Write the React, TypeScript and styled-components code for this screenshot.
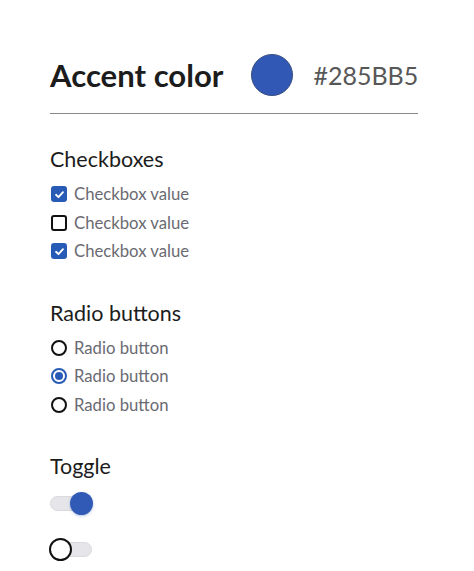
import styled, { createGlobalStyle } from "styled-components";

const ACCENT = "#285BB5";

const GlobalStyle = createGlobalStyle`
  body {
    margin: 0;
    background: #fff;
    font-family: "Lato", "Liberation Sans", sans-serif;
  }
`;

const Page = styled.div`
  padding: 54px 56px 0 50px;
`;

const HeaderRow = styled.div`
  display: flex;
  align-items: center;
  height: 42px;
`;

const Title = styled.h1`
  margin: 0;
  font-size: 31.1px;
  font-weight: 700;
  color: #1c1c1c;
  white-space: nowrap;
  flex-shrink: 0;
`;

const Swatch = styled.div<{ $color: string }>`
  width: 42px;
  height: 42px;
  flex-shrink: 0;
  border-radius: 50%;
  background: ${(p) => p.$color};
  border: 1px solid #3a4f80;
  box-sizing: border-box;
  margin-left: 28px;
`;

const HexCode = styled.span`
  margin-left: 20px;
  font-size: 25px;
  color: #575757;
  white-space: nowrap;
`;

const Divider = styled.hr`
  margin: 17px 0 0;
  border: 0;
  border-top: 1px solid #8a8a8a;
`;

const Section = styled.section<{ $first?: boolean }>`
  margin-top: ${(p) => (p.$first ? "32px" : "34px")};
`;

const SectionTitle = styled.h2`
  margin: 0;
  font-size: 21.5px;
  line-height: 26px;
  font-weight: 400;
  color: #1c1c1c;
`;

const List = styled.div`
  display: flex;
  flex-direction: column;
  margin-top: 8px;
`;

const Option = styled.label`
  display: flex;
  align-items: center;
  gap: 7px;
  height: 28.5px;
  font-size: 16.7px;
  color: #6a6a72;
  padding-left: 1px;
`;

const Box = styled.span<{ $checked?: boolean }>`
  width: 16px;
  height: 16px;
  box-sizing: border-box;
  border-radius: 3px;
  display: flex;
  align-items: center;
  justify-content: center;
  background: ${(p) => (p.$checked ? ACCENT : "#fff")};
  border: ${(p) => (p.$checked ? "none" : "2px solid #111")};
`;

const Radio = styled.span<{ $checked?: boolean }>`
  width: 16px;
  height: 16px;
  box-sizing: border-box;
  border-radius: 50%;
  border: 2px solid ${(p) => (p.$checked ? ACCENT : "#111")};
  display: flex;
  align-items: center;
  justify-content: center;

  &::after {
    content: "";
    width: 8px;
    height: 8px;
    border-radius: 50%;
    background: ${(p) => (p.$checked ? ACCENT : "transparent")};
  }
`;

const ToggleList = styled.div`
  display: flex;
  flex-direction: column;
  gap: 23px;
  margin-top: 13px;
`;

const Toggle = styled.div`
  position: relative;
  width: 43px;
  height: 23px;
  display: flex;
  align-items: center;
`;

const Track = styled.span`
  width: 42px;
  height: 15px;
  border-radius: 8px;
  background: #e6e6ea;
  border: 1px solid #dadade;
  box-sizing: border-box;
`;

const Thumb = styled.span<{ $on?: boolean }>`
  position: absolute;
  top: 0;
  left: ${(p) => (p.$on ? "20px" : "-1px")};
  width: 23px;
  height: 23px;
  box-sizing: border-box;
  border-radius: 50%;
  background: ${(p) => (p.$on ? "#3159b6" : "#fff")};
  border: ${(p) => (p.$on ? "none" : "2px solid #111")};
  box-shadow: ${(p) => (p.$on ? "0 1px 3px rgba(40, 91, 181, 0.35)" : "none")};
`;

const Check = () => (
  <svg width="11" height="11" viewBox="0 0 12 12" fill="none">
    <path d="M2.2 6.3 L4.9 8.9 L9.8 3.4" stroke="#fff" strokeWidth="2" strokeLinecap="round" strokeLinejoin="round" />
  </svg>
);

const checkboxes = [true, false, true];
const radios = [false, true, false];

export default function App() {
  return (
    <>
      <GlobalStyle />
      <Page>
        <HeaderRow>
          <Title>Accent color</Title>
          <Swatch $color="#3158B5" />
          <HexCode>#285BB5</HexCode>
        </HeaderRow>
        <Divider />

        <Section $first>
          <SectionTitle>Checkboxes</SectionTitle>
          <List>
            {checkboxes.map((c, i) => (
              <Option key={i}>
                <Box $checked={c}>{c && <Check />}</Box>
                Checkbox value
              </Option>
            ))}
          </List>
        </Section>

        <Section>
          <SectionTitle>Radio buttons</SectionTitle>
          <List>
            {radios.map((c, i) => (
              <Option key={i}>
                <Radio $checked={c} />
                Radio button
              </Option>
            ))}
          </List>
        </Section>

        <Section>
          <SectionTitle>Toggle</SectionTitle>
          <ToggleList>
            <Toggle>
              <Track />
              <Thumb $on />
            </Toggle>
            <Toggle>
              <Track />
              <Thumb />
            </Toggle>
          </ToggleList>
        </Section>
      </Page>
    </>
  );
}
